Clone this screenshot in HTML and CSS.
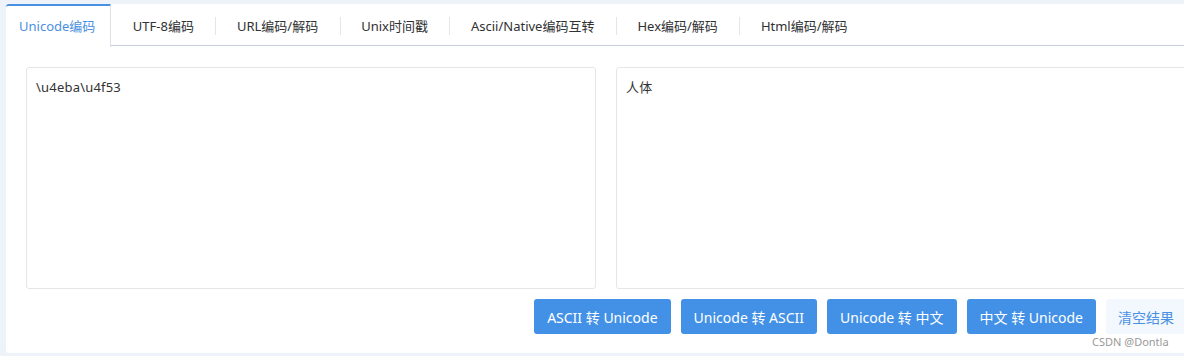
FILE: index.html
```html
<!DOCTYPE html>
<html lang="zh-CN">
<head>
<meta charset="utf-8">
<title>Unicode编码</title>
<link rel="stylesheet" href="styles.css">
</head>
<body>
<div class="card">
  <div class="tabs">
    <div class="tab active">Unicode编码</div>
    <div class="tab">UTF-8编码</div>
    <div class="tab sep">URL编码/解码</div>
    <div class="tab sep">Unix时间戳</div>
    <div class="tab sep">Ascii/Native编码互转</div>
    <div class="tab sep">Hex编码/解码</div>
    <div class="tab sep">Html编码/解码</div>
  </div>
  <div class="content">
    <div class="boxes">
      <textarea class="box">\u4eba\u4f53</textarea>
      <textarea class="box">人体</textarea>
    </div>
    <div class="actions">
      <button class="btn">ASCII 转 Unicode</button>
      <button class="btn">Unicode 转 ASCII</button>
      <button class="btn">Unicode 转 中文</button>
      <button class="btn">中文 转 Unicode</button>
      <button class="btn light">清空结果</button>
    </div>
  </div>
</div>
<div class="watermark">CSDN @Dontla</div>
</body>
</html>
```
FILE: styles.css
```css
html, body {
  margin: 0;
  padding: 0;
  overflow: hidden;
}
body {
  background: #eef3f9;
  width: 1184px;
  height: 356px;
  position: relative;
  font-family: "Noto Sans", "Noto Sans CJK SC", sans-serif;
  font-size: 13px;
  color: #333;
}
.card {
  margin: 4px 0 0 6px;
  width: 1200px;
  height: 349px;
  background: #fff;
  border-radius: 3px;
  box-sizing: border-box;
}
.tabs {
  display: flex;
  height: 42px;
  border-bottom: 1px solid #c8cee2;
  box-sizing: border-box;
}
.tab {
  position: relative;
  display: flex;
  align-items: center;
  padding: 0 21.5px;
  height: 42px;
  box-sizing: border-box;
  color: #303133;
  white-space: nowrap;
}
.tab.sep::before {
  content: "";
  position: absolute;
  left: 0;
  top: 13px;
  height: 18px;
  width: 1px;
  background: #e6e6e6;
}
.tab.active {
  padding: 0 15px 2px 13px;
  color: #4a90e2;
  border-top: 2px solid #4a90e2;
  border-right: 1px solid #dcdfe6;
  background: #fff;
  height: 43px;
  margin-bottom: -1px;
  border-top-left-radius: 3px;
}
.content {
  padding: 21px 20px 19px 20px;
}
.boxes {
  display: flex;
  gap: 20px;
}
.box {
  flex: 1;
  height: 222px;
  box-sizing: border-box;
  border: 1px solid #e6e6e6;
  border-radius: 3px;
  padding: 9px 9px;
  resize: none;
  font-family: "Noto Sans", "Noto Sans CJK SC", sans-serif;
  font-size: 13px;
  line-height: 20px;
  color: #333;
  outline: none;
  margin: 0;
  letter-spacing: 0.2px;
}
.actions {
  display: flex;
  justify-content: flex-end;
  gap: 10px;
  margin-top: 10px;
}
.btn {
  height: 35px;
  padding: 0 13px;
  border: none;
  border-radius: 3px;
  background: #4391e6;
  color: #fff;
  font-family: "Noto Sans", "Noto Sans CJK SC", sans-serif;
  font-size: 14px;
  cursor: pointer;
}
.btn.light {
  background: #f3f8fe;
  color: #4a90e2;
  width: 80px;
  padding: 0;
}
.watermark {
  position: absolute;
  left: 1092px;
  top: 334px;
  font-size: 11px;
  color: #999;
  font-family: "Noto Sans", sans-serif;
}
```
